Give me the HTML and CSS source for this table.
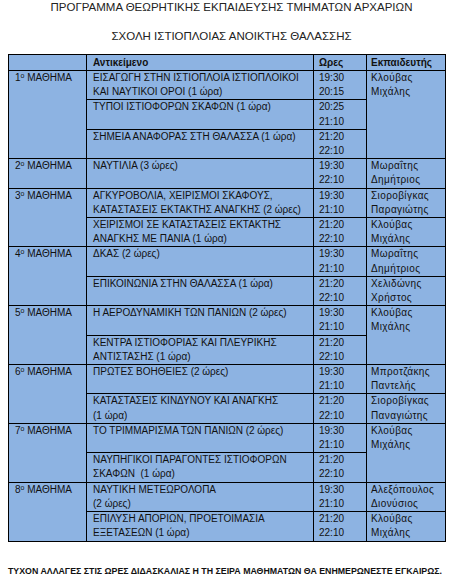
FILE: index.html
```html
<!DOCTYPE html>
<html lang="el">
<head>
    <meta charset="utf-8">
    <meta name="viewport" content="width=device-width, initial-scale=1.0">
    <title>Πρόγραμμα θεωρητικής εκπαίδευσης</title>
    <link rel="stylesheet" href="styles.css">
</head>
<body>
    <h1 class="title">ΠΡΟΓΡΑΜΜΑ ΘΕΩΡΗΤΙΚΗΣ ΕΚΠΑΙΔΕΥΣΗΣ ΤΜΗΜΑΤΩΝ ΑΡΧΑΡΙΩΝ</h1>
    <h2 class="title subtitle">ΣΧΟΛΗ ΙΣΤΙΟΠΛΟΙΑΣ ΑΝΟΙΚΤΗΣ ΘΑΛΑΣΣΗΣ</h2>

    <table class="schedule">
        <colgroup>
            <col class="col-lesson">
            <col class="col-subject">
            <col class="col-hours">
            <col class="col-teacher">
        </colgroup>
        <tr class="head-row">
            <th></th>
            <th>Αντικείμενο</th>
            <th class="hours">Ωρες</th>
            <th class="teacher">Εκπαιδευτής</th>
        </tr>

        <tr>
            <td rowspan="3">1<sup>ο</sup> ΜΑΘΗΜΑ</td>
            <td>ΕΙΣΑΓΩΓΗ ΣΤΗΝ ΙΣΤΙΟΠΛΟΙΑ ΙΣΤΙΟΠΛΟΙΚΟΙ<br>ΚΑΙ ΝΑΥΤΙΚΟΙ ΟΡΟΙ (1 ώρα)</td>
            <td class="hours">19:30<br>20:15</td>
            <td class="teacher" rowspan="3">Κλούβας<br>Μιχάλης</td>
        </tr>
        <tr>
            <td>ΤΥΠΟΙ ΙΣΤΙΟΦΟΡΩΝ ΣΚΑΦΩΝ (1 ώρα)</td>
            <td class="hours">20:25<br>21:10</td>
        </tr>
        <tr>
            <td>ΣΗΜΕΙΑ ΑΝΑΦΟΡΑΣ ΣΤΗ ΘΑΛΑΣΣΑ (1 ώρα)</td>
            <td class="hours">21:20<br>22:10</td>
        </tr>

        <tr>
            <td>2<sup>ο</sup> ΜΑΘΗΜΑ</td>
            <td>ΝΑΥΤΙΛΙΑ (3 ώρες)</td>
            <td class="hours">19:30<br>22:10</td>
            <td class="teacher">Μωραΐτης<br>Δημήτριος</td>
        </tr>

        <tr>
            <td rowspan="2">3<sup>ο</sup> ΜΑΘΗΜΑ</td>
            <td>ΑΓΚΥΡΟΒΟΛΙΑ, ΧΕΙΡΙΣΜΟΙ ΣΚΑΦΟΥΣ,<br>ΚΑΤΑΣΤΑΣΕΙΣ ΕΚΤΑΚΤΗΣ ΑΝΑΓΚΗΣ (2 ώρες)</td>
            <td class="hours">19:30<br>21:10</td>
            <td class="teacher">Σιοροβίγκας<br>Παραγιώτης</td>
        </tr>
        <tr>
            <td>ΧΕΙΡΙΣΜΟΙ ΣΕ ΚΑΤΑΣΤΑΣΕΙΣ ΕΚΤΑΚΤΗΣ<br>ΑΝΑΓΚΗΣ ΜΕ ΠΑΝΙΑ (1 ώρα)</td>
            <td class="hours">21:20<br>22:10</td>
            <td class="teacher">Κλούβας<br>Μιχάλης</td>
        </tr>

        <tr>
            <td rowspan="2">4<sup>ο</sup> ΜΑΘΗΜΑ</td>
            <td>ΔΚΑΣ (2 ώρες)</td>
            <td class="hours">19:30<br>21:10</td>
            <td class="teacher">Μωραΐτης<br>Δημήτριος</td>
        </tr>
        <tr>
            <td>ΕΠΙΚΟΙΝΩΝΙΑ ΣΤΗΝ ΘΑΛΑΣΣΑ (1 ώρα)</td>
            <td class="hours">21:20<br>22:10</td>
            <td class="teacher">Χελιδώνης<br>Χρήστος</td>
        </tr>

        <tr>
            <td rowspan="2">5<sup>ο</sup> ΜΑΘΗΜΑ</td>
            <td>Η ΑΕΡΟΔΥΝΑΜΙΚΗ ΤΩΝ ΠΑΝΙΩΝ (2 ώρες)</td>
            <td class="hours">19:30<br>21:10</td>
            <td class="teacher" rowspan="2">Κλούβας<br>Μιχάλης</td>
        </tr>
        <tr>
            <td>ΚΕΝΤΡΑ ΙΣΤΙΟΦΟΡΙΑΣ ΚΑΙ ΠΛΕΥΡΙΚΗΣ<br>ΑΝΤΙΣΤΑΣΗΣ (1 ώρα)</td>
            <td class="hours">21:20<br>22:10</td>
        </tr>

        <tr>
            <td rowspan="2">6<sup>ο</sup> ΜΑΘΗΜΑ</td>
            <td>ΠΡΩΤΕΣ ΒΟΗΘΕΙΕΣ (2 ώρες)</td>
            <td class="hours">19:30<br>21:10</td>
            <td class="teacher">Μπροτζάκης<br>Παντελής</td>
        </tr>
        <tr>
            <td>ΚΑΤΑΣΤΑΣΕΙΣ ΚΙΝΔΥΝΟΥ ΚΑΙ ΑΝΑΓΚΗΣ<br>(1 ώρα)</td>
            <td class="hours">21:20<br>22:10</td>
            <td class="teacher">Σιοροβίγκας<br>Παναγιώτης</td>
        </tr>

        <tr>
            <td rowspan="2">7<sup>ο</sup> ΜΑΘΗΜΑ</td>
            <td>ΤΟ ΤΡΙΜΜΑΡΙΣΜΑ ΤΩΝ ΠΑΝΙΩΝ (2 ώρες)</td>
            <td class="hours">19:30<br>21:10</td>
            <td class="teacher" rowspan="2">Κλούβας<br>Μιχάλης</td>
        </tr>
        <tr>
            <td>ΝΑΥΠΗΓΙΚΟΙ ΠΑΡΑΓΟΝΤΕΣ ΙΣΤΙΟΦΟΡΩΝ<br>ΣΚΑΦΩΝ &nbsp;(1 ώρα)</td>
            <td class="hours">21:20<br>22:10</td>
        </tr>

        <tr>
            <td rowspan="2">8<sup>ο</sup> ΜΑΘΗΜΑ</td>
            <td>ΝΑΥΤΙΚΗ ΜΕΤΕΩΡΟΛΟΠΑ<br>(2 ώρες)</td>
            <td class="hours">19:30<br>21:10</td>
            <td class="teacher">Αλεξόπουλος<br>Διονύσιος</td>
        </tr>
        <tr>
            <td>ΕΠΙΛΥΣΗ ΑΠΟΡΙΩΝ, ΠΡΟΕΤΟΙΜΑΣΙΑ<br>ΕΞΕΤΑΣΕΩΝ (1 ώρα)</td>
            <td class="hours">21:20<br>22:10</td>
            <td class="teacher">Κλούβας<br>Μιχάλης</td>
        </tr>
    </table>

    <p class="note">ΤΥΧΟΝ ΑΛΛΑΓΕΣ ΣΤΙΣ ΩΡΕΣ ΔΙΔΑΣΚΑΛΙΑΣ Η ΤΗ ΣΕΙΡΑ ΜΑΘΗΜΑΤΩΝ ΘΑ ΕΝΗΜΕΡΩΝΕΣΤΕ ΕΓΚΑΙΡΩΣ.</p>
</body>
</html>
```

FILE: styles.css
```css
body {
    margin: 0;
    background: #fff;
    color: #111;
    font-family: "Liberation Sans", Arial, sans-serif;
}
.title {
    margin: 0;
    padding-left: 6px;
    font-size: 11.5px;
    line-height: 14px;
    font-weight: normal;
    text-align: center;
    color: #222;
}
.subtitle {
    margin-top: 14.5px;
}
.schedule {
    margin: 11.5px 0 0 8px;
    width: 437px;
    border-collapse: collapse;
    table-layout: fixed;
    background: #8db3e2;
    font-size: 10px;
    line-height: 14.2px;
}
.col-lesson {
    width: 78px;
}
.col-subject {
    width: 227px;
}
.col-hours {
    width: 53px;
}
.col-teacher {
    width: 79px;
}
.schedule th,
.schedule td {
    border: 1px solid #000;
    padding: 0 6px;
    text-align: left;
    vertical-align: top;
    white-space: nowrap;
}
.schedule th {
    line-height: 15px;
    font-weight: bold;
}
.schedule .hours {
    padding-left: 5px;
}
.schedule .teacher {
    padding-left: 4px;
    padding-right: 0;
    letter-spacing: 0.4px;
}
.schedule th.teacher {
    letter-spacing: 0;
}
.schedule sup {
    font-size: 7px;
    line-height: 0;
    vertical-align: 3px;
}
.note {
    margin: 23px 0 0 8px;
    font-size: 8.8px;
    line-height: 12px;
    font-weight: bold;
    color: #111;
}
```
